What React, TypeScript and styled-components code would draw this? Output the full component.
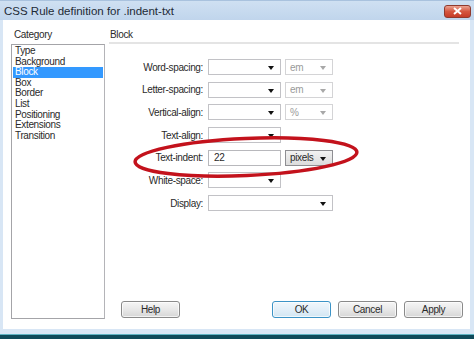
import styled, { createGlobalStyle } from "styled-components";

const GlobalStyle = createGlobalStyle`
  html, body {
    margin: 0;
    padding: 0;
    background: #d6e5f5;
  }
  * {
    box-sizing: border-box;
  }
`;

const categories = ["Type", "Background", "Block", "Box", "Border", "List", "Positioning", "Extensions", "Transition"];

type Row = {
  label: string;
  kind: "select" | "input";
  value?: string;
  unit?: string;
  unitEnabled?: boolean;
  wide?: boolean;
};

const rows: Row[] = [
  { label: "Word-spacing:", kind: "select", unit: "em" },
  { label: "Letter-spacing:", kind: "select", unit: "em" },
  { label: "Vertical-align:", kind: "select", unit: "%" },
  { label: "Text-align:", kind: "select" },
  { label: "Text-indent:", kind: "input", value: "22", unit: "pixels", unitEnabled: true },
  { label: "White-space:", kind: "select" },
  { label: "Display:", kind: "select", wide: true },
];

const App = () => {
  return (
    <>
      <GlobalStyle />
      <Window>
        <TitleBar>
          <Title>CSS Rule definition for .indent-txt</Title>
          <CloseButton>
            <svg width="9" height="8" viewBox="0 0 9 8">
              <path d="M1 1L8 7M8 1L1 7" stroke="#fff" strokeWidth="2" />
            </svg>
          </CloseButton>
        </TitleBar>
        <Client>
          <CategoryColumn>
            <Heading>Category</Heading>
            <ListBox>
              {categories.map((c) => (
                <ListItem key={c} $selected={c === "Block"}>{c}</ListItem>
              ))}
            </ListBox>
          </CategoryColumn>
          <PanelColumn>
            <PanelHeading>Block</PanelHeading>
            <Form>
              {rows.map((r) => (
                <FormRow key={r.label}>
                  <Label>{r.label}</Label>
                  {r.kind === "input" ? (
                    <TextField>{r.value}</TextField>
                  ) : (
                    <Combo $wide={r.wide}>
                      <Arrow />
                    </Combo>
                  )}
                  {r.unit && (
                    <UnitCombo $enabled={r.unitEnabled}>
                      {r.unit}
                      <Arrow $disabled={!r.unitEnabled} />
                    </UnitCombo>
                  )}
                </FormRow>
              ))}
            </Form>
            <ButtonBar>
              <Button>Help</Button>
              <Spacer />
              <Button $default>OK</Button>
              <Button>Cancel</Button>
              <Button>Apply</Button>
            </ButtonBar>
          </PanelColumn>
          <Highlight width="474" height="339" viewBox="0 0 474 339">
            <ellipse
              cx="246"
              cy="157"
              rx="111"
              ry="18.5"
              transform="rotate(-2.5 246 157)"
              fill="none"
              stroke="#c3121c"
              strokeWidth="3.5"
            />
          </Highlight>
        </Client>
        <Taskbar />
      </Window>
    </>
  );
};

export default App;

const Window = styled.div`
  width: 474px;
  height: 339px;
  display: flex;
  flex-direction: column;
  background: #d8e6f5;
  font-family: "Liberation Sans", Arial, sans-serif;
  font-size: 10px;
  letter-spacing: -0.35px;
  color: #2a2a2a;
  overflow: hidden;
  position: relative;
`;

const TitleBar = styled.div`
  height: 20px;
  flex: none;
  display: flex;
  align-items: center;
  justify-content: space-between;
  padding: 0 3px 0 4px;
  background: linear-gradient(#cfe0f2, #c0d5ec);
  border-top: 1px solid #a9c2de;
`;

const Title = styled.span`
  font-size: 11.5px;
  letter-spacing: 0;
  color: #1e2a36;
`;

const CloseButton = styled.div`
  width: 27px;
  height: 13px;
  margin-top: 1px;
  display: flex;
  align-items: center;
  justify-content: center;
  border: 1px solid #8f3a2e;
  border-radius: 3px;
  background: linear-gradient(#eba392, #d5563f 50%, #c63c27);
`;

const Client = styled.div`
  flex: 1;
  margin: 0 4px 5px 3px;
  background: #fff;
  display: flex;
  padding: 8px 7px 10px 8px;
  gap: 4px;
`;

const CategoryColumn = styled.div`
  width: 94px;
  display: flex;
  flex-direction: column;
`;

const Heading = styled.div`
  height: 16px;
  padding-left: 3px;
  line-height: 14px;
`;

const ListBox = styled.div`
  flex: 1;
  border: 1px solid #a4a4a8;
  border-right-color: #b4b4b8;
  padding: 1px 1px;
  display: flex;
  flex-direction: column;
`;

const ListItem = styled.div<{ $selected?: boolean }>`
  height: 10.6px;
  line-height: 10.6px;
  padding-left: 2px;
  background: ${(p) => (p.$selected ? "#3399ff" : "transparent")};
  color: ${(p) => (p.$selected ? "#fff" : "#2a2a2a")};
`;

const PanelColumn = styled.div`
  flex: 1;
  display: flex;
  flex-direction: column;
`;

const PanelHeading = styled.div`
  height: 16px;
  line-height: 14px;
  padding-left: 1px;
  margin-right: 4px;
  border-bottom: 2px solid #e4e4e4;
`;

const Form = styled.div`
  display: flex;
  flex-direction: column;
  gap: 6.7px;
  margin-top: 15px;
`;

const FormRow = styled.div`
  display: flex;
  align-items: center;
  gap: 4px;
  height: 16px;
`;

const Label = styled.div`
  width: 95px;
  text-align: right;
  padding-right: 1px;
`;

const fieldBase = `
  height: 16px;
  border: 1px solid #c2c2c6;
  background: #fff;
  position: relative;
  display: flex;
  align-items: center;
  padding-left: 4px;
`;

const Combo = styled.div<{ $wide?: boolean }>`
  ${fieldBase}
  width: ${(p) => (p.$wide ? "125px" : "73px")};
`;

const TextField = styled.div`
  ${fieldBase}
  width: 73px;
  border-color: #b8b8bc;
  padding-left: 5px;
`;

const UnitCombo = styled.div<{ $enabled?: boolean }>`
  ${fieldBase}
  width: 48px;
  color: ${(p) => (p.$enabled ? "#2a2a2a" : "#9a9a9a")};
  border-color: ${(p) => (p.$enabled ? "#8e8e92" : "#d4d4d6")};
  background: ${(p) => (p.$enabled ? "linear-gradient(#f2f2f2, #dcdcdc)" : "#fff")};
`;

const Arrow = styled.span<{ $disabled?: boolean }>`
  position: absolute;
  right: 6px;
  top: 6px;
  width: 0;
  height: 0;
  border-left: 3px solid transparent;
  border-right: 3px solid transparent;
  border-top: 4px solid ${(p) => (p.$disabled ? "#a8a8a8" : "#111")};
`;

const ButtonBar = styled.div`
  margin-top: auto;
  display: flex;
  gap: 7px;
  padding-left: 12px;
  margin-bottom: 1px;
`;

const Spacer = styled.div`
  flex: 1;
`;

const Button = styled.div<{ $default?: boolean }>`
  width: 59px;
  height: 17px;
  display: flex;
  align-items: center;
  justify-content: center;
  border: 1px solid ${(p) => (p.$default ? "#3c93c6" : "#8a8a8a")};
  border-radius: 3px;
  background: ${(p) =>
    p.$default
      ? "linear-gradient(#f0f7fc, #e3eff8 50%, #d2e6f3)"
      : "linear-gradient(#f6f6f6, #e8e8e8 50%, #d6d6d6)"};
  box-shadow: inset 0 0 0 1px rgba(255, 255, 255, 0.7);
`;

const Highlight = styled.svg`
  position: absolute;
  left: 0;
  top: 0;
  pointer-events: none;
`;

const Taskbar = styled.div`
  height: 5px;
  flex: none;
  background: #0f4a5a;
  border-top: 1px solid #5fb3c2;
`;
